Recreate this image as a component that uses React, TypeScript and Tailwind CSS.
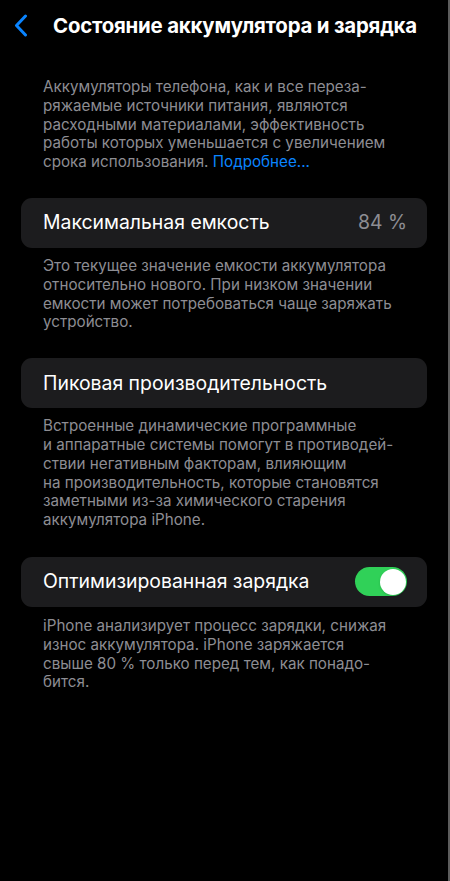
import { useState } from "react";

const font = { fontFamily: "Inter, 'Noto Sans', sans-serif" };

function Note({ lines, link }: { lines: string[]; link?: string }) {
  return (
    <p className="px-[43px] text-[15.2px] leading-[18.8px] text-[#8d8d93] whitespace-nowrap">
      {lines.map((l, i) => (
        <span key={i} className="block">
          {l}
          {link && i === lines.length - 1 ? <span className="text-[#0a84ff]"> {link}</span> : null}
        </span>
      ))}
    </p>
  );
}

function Row({ children }: { children: React.ReactNode }) {
  return (
    <div className="mx-[21px] flex h-[50px] items-center justify-between rounded-[11px] bg-[#1c1c1e] pl-[22px] pr-[20px]">
      {children}
    </div>
  );
}

function Toggle({ on, onChange }: { on: boolean; onChange: (v: boolean) => void }) {
  return (
    <button
      type="button"
      onClick={() => onChange(!on)}
      className={`flex h-[29px] w-[52px] items-center rounded-full p-[1.5px] ${on ? "justify-end bg-[#30d158]" : "justify-start bg-[#39393d]"}`}
    >
      <span className="block h-[26px] w-[26px] rounded-full bg-white shadow" />
    </button>
  );
}

export default function App() {
  const [optimized, setOptimized] = useState(true);

  return (
    <div className="min-h-[881px] w-[450px] border-r-2 border-[#5c5c5c] bg-black" style={font}>
      <header className="flex h-[52px] items-center">
        <svg className="ml-[14px] mt-[-2px]" width="14" height="23" viewBox="0 0 14 23" fill="none">
          <path d="M11.5 2 L2.5 11.5 L11.5 21" stroke="#0a84ff" strokeWidth="3" strokeLinecap="round" strokeLinejoin="round" />
        </svg>
        <h1 className="ml-[25px] text-[20.4px] font-bold tracking-[-0.2px] text-white">Состояние аккумулятора и зарядка</h1>
      </header>

      <div className="pt-[26px]">
        <Note
          lines={[
            "Аккумуляторы телефона, как и все переза-",
            "ряжаемые источники питания, являются",
            "расходными материалами, эффективность",
            "работы которых уменьшается с увеличением",
            "срока использования.",
          ]}
          link="Подробнее..."
        />
      </div>

      <div className="mt-[26px]">
        <Row>
          <span className="text-[19.4px] text-white">Максимальная емкость</span>
          <span className="text-[19.4px] text-[#8d8d93]">84 %</span>
        </Row>
      </div>
      <div className="mt-[9px]">
        <Note
          lines={[
            "Это текущее значение емкости аккумулятора",
            "относительно нового. При низком значении",
            "емкости может потребоваться чаще заряжать",
            "устройство.",
          ]}
        />
      </div>

      <div className="mt-[26px]">
        <Row>
          <span className="text-[19.4px] text-white">Пиковая производительность</span>
        </Row>
      </div>
      <div className="mt-[9px]">
        <Note
          lines={[
            "Встроенные динамические программные",
            "и аппаратные системы помогут в противодей-",
            "ствии негативным факторам, влияющим",
            "на производительность, которые становятся",
            "заметными из-за химического старения",
            "аккумулятора iPhone.",
          ]}
        />
      </div>

      <div className="mt-[27px]">
        <Row>
          <span className="text-[19.4px] text-white">Оптимизированная зарядка</span>
          <Toggle on={optimized} onChange={setOptimized} />
        </Row>
      </div>
      <div className="mt-[10px]">
        <Note
          lines={[
            "iPhone анализирует процесс зарядки, снижая",
            "износ аккумулятора. iPhone заряжается",
            "свыше 80 % только перед тем, как понадо-",
            "бится.",
          ]}
        />
      </div>
    </div>
  );
}
